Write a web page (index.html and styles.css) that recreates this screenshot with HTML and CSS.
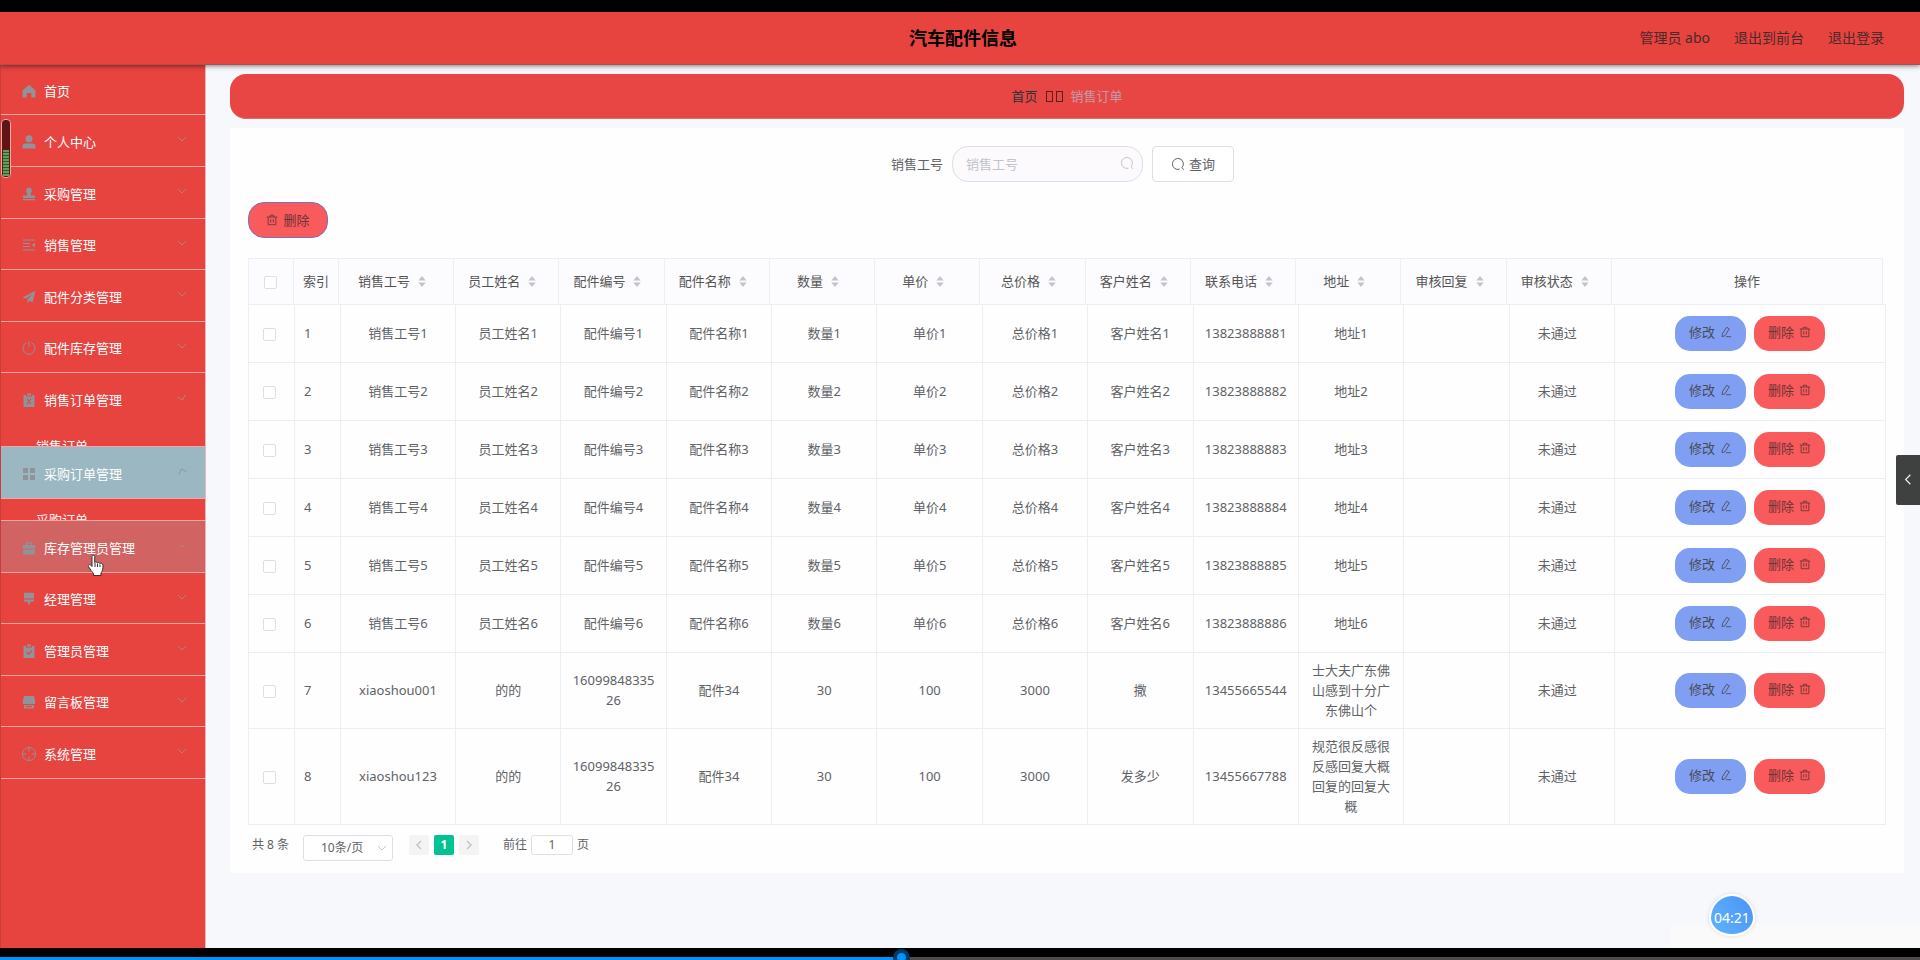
FILE: index.html
```html
<!DOCTYPE html>
<html lang="zh-CN">
<head>
<meta charset="utf-8">
<title>汽车配件信息</title>
<link rel="stylesheet" href="styles.css">
</head>
<body>
<svg class="sprite" aria-hidden="true">
  <symbol id="i-down" viewBox="0 0 10 10"><path d="M1 3l4 4 4-4" fill="none" stroke="currentColor"/></symbol>
  <symbol id="i-left" viewBox="0 0 10 10"><path d="M7 1L3 5l4 4" fill="none" stroke="currentColor" stroke-width="1.5"/></symbol>
  <symbol id="i-right" viewBox="0 0 10 10"><path d="M3 1l4 4-4 4" fill="none" stroke="currentColor" stroke-width="1.5"/></symbol>
  <symbol id="i-search" viewBox="0 0 14 14"><path d="M8.500 12.200A5.500 5.500 0 1 1 11 10.600L12.800 12.800" fill="none" stroke="currentColor"/></symbol>
  <symbol id="i-trash" viewBox="0 0 14 14"><path d="M1 3.500h12M5 3.500v-2h4v2M2.500 3.500v9h9v-9M5.500 6v4M8.500 6v4" fill="none" stroke="currentColor"/></symbol>
  <symbol id="i-edit" viewBox="0 0 14 14"><path d="M7.800 1.500l3 1.800-5 8-3.300 1.200.3-3.500zM7 12.500h6" fill="none" stroke="currentColor"/></symbol>
  <symbol id="i-home" viewBox="0 0 14 14"><path d="M7 .8l6.500 5.700V13.500H9.300V9H4.700v4.500H.5V6.500z" fill="currentColor"/></symbol>
  <symbol id="i-user" viewBox="0 0 14 14"><circle cx="7" cy="3.800" r="3.500" fill="currentColor"/><path d="M.5 13.500V11.500a3 3 0 0 1 3-3h7a3 3 0 0 1 3 3v2z" fill="currentColor"/></symbol>
  <symbol id="i-stamp" viewBox="0 0 14 14"><path d="M7 .5a3 3 0 0 1 2 5.200L8.800 8.500H13V11H1V8.500h4.200L5 5.700A3 3 0 0 1 7 .5zM1 12h12v1.200H1z" fill="currentColor"/></symbol>
  <symbol id="i-unfold" viewBox="0 0 14 14"><path d="M1 2h12M1 5.500h7M1 8.500h7M1 12h12" fill="none" stroke="currentColor" stroke-width="1.200"/><path d="M9.500 7L13 4.800v4.400z" fill="currentColor"/></symbol>
  <symbol id="i-send" viewBox="0 0 14 14"><path d="M13.500.8L.5 7.500l3.500 1.300L11 3.500 5.500 9.500v4l2-2.800 3 1.800z" fill="currentColor"/></symbol>
  <symbol id="i-power" viewBox="0 0 14 14"><path d="M4.500 1.800a6 6 0 1 0 5 0M7 .3v5.500" fill="none" stroke="currentColor"/></symbol>
  <symbol id="i-clip-x" viewBox="0 0 14 14"><path fill-rule="evenodd" d="M1.500 2H4v1.500h6V2h2.500v12h-11zM4.600 6.200l2 2.300-2 2.300.8.700L7 9.300l1.600 2.200.8-.7-2-2.300 2-2.300-.8-.7L7 7.700 5.400 5.500z" fill="currentColor"/><path d="M5 .5h4v2H5z" fill="currentColor"/></symbol>
  <symbol id="i-clip-v" viewBox="0 0 14 14"><path fill-rule="evenodd" d="M1.500 2H4v1.500h6V2h2.500v12h-11zM4 8.200l2.500 2.700L10.300 7l-.8-.8-3 3.100-1.700-1.900z" fill="currentColor"/><path d="M5 .5h4v2H5z" fill="currentColor"/></symbol>
  <symbol id="i-grid" viewBox="0 0 14 14"><path d="M1 1h5v5H1zM8 1h5v5H8zM1 8h5v5H1zM8 8h5v5H8z" fill="currentColor"/></symbol>
  <symbol id="i-case" viewBox="0 0 14 14"><path fill-rule="evenodd" d="M.8 4H4V1.500h6V4h3.200v3.500H.8zM5 2.500V4h4V2.500zM1.200 8.500h11.600v5H1.200z" fill="currentColor"/></symbol>
  <symbol id="i-brush" viewBox="0 0 14 14"><path d="M2 .8h10v5.700H2zM2 7.500h10v2H8.800L7 13.500 5.200 9.500H2z" fill="currentColor"/></symbol>
  <symbol id="i-shop" viewBox="0 0 14 14"><path d="M2 1h10l1.200 5v3H.8V6zM2 10h10v3.500H2z" fill="currentColor"/><path d="M1 9.500h12M4 11.500h6" stroke="#e7433f"/></symbol>
  <symbol id="i-aim" viewBox="0 0 14 14"><path d="M7 .5a6.500 6.500 0 1 0 .01 0M7 .5v4M7 9.500v4M.5 7h4M9.500 7h4" fill="none" stroke="currentColor"/></symbol>
  <symbol id="i-sort" viewBox="0 0 8 12"><path d="M4 0l4 5H0zM4 12l4-5H0z" fill="#c0c4cc"/></symbol>
</svg>

<header class="topbar">
  <h1 class="topbar-title">汽车配件信息</h1>
  <nav class="topbar-links"><span>管理员 abo</span><a href="#">退出到前台</a><a href="#">退出登录</a></nav>
</header>

<div class="layout">
  <aside class="sidebar">
    <ul class="menu">
      <li class="home"><a class="menu-title" href="#"><svg class="ico"><use href="#i-home"/></svg>首页</a></li>
      <li><a class="menu-title" href="#"><svg class="ico"><use href="#i-user"/></svg>个人中心<svg class="arrow"><use href="#i-down"/></svg></a></li>
      <li><a class="menu-title" href="#"><svg class="ico"><use href="#i-stamp"/></svg>采购管理<svg class="arrow"><use href="#i-down"/></svg></a></li>
      <li class="short"><a class="menu-title" href="#"><svg class="ico"><use href="#i-unfold"/></svg>销售管理<svg class="arrow"><use href="#i-down"/></svg></a></li>
      <li><a class="menu-title" href="#"><svg class="ico"><use href="#i-send"/></svg>配件分类管理<svg class="arrow"><use href="#i-down"/></svg></a></li>
      <li class="short"><a class="menu-title" href="#"><svg class="ico"><use href="#i-power"/></svg>配件库存管理<svg class="arrow"><use href="#i-down"/></svg></a></li>
      <li><a class="menu-title" href="#"><svg class="ico"><use href="#i-clip-x"/></svg>销售订单管理<svg class="arrow closing"><use href="#i-down"/></svg></a>
        <div class="submenu"><a href="#">销售订单</a></div></li>
      <li class="active"><a class="menu-title" href="#"><svg class="ico"><use href="#i-grid"/></svg>采购订单管理<svg class="arrow opening"><use href="#i-down"/></svg></a>
        <div class="submenu"><a href="#">采购订单</a></div></li>
      <li class="hover"><a class="menu-title" href="#"><svg class="ico"><use href="#i-case"/></svg>库存管理员管理<svg class="arrow"><use href="#i-down"/></svg></a></li>
      <li class="short"><a class="menu-title" href="#"><svg class="ico"><use href="#i-brush"/></svg>经理管理<svg class="arrow"><use href="#i-down"/></svg></a></li>
      <li><a class="menu-title" href="#"><svg class="ico"><use href="#i-clip-v"/></svg>管理员管理<svg class="arrow"><use href="#i-down"/></svg></a></li>
      <li class="short"><a class="menu-title" href="#"><svg class="ico"><use href="#i-shop"/></svg>留言板管理<svg class="arrow"><use href="#i-down"/></svg></a></li>
      <li><a class="menu-title" href="#"><svg class="ico"><use href="#i-aim"/></svg>系统管理<svg class="arrow"><use href="#i-down"/></svg></a></li>
    </ul>
  </aside>

  <main class="content">
    <nav class="crumbs"><a href="#">首页</a><span class="crumb-sep"><i></i><i></i></span><span class="crumb-now">销售订单</span></nav>

    <section class="card">
      <form class="search">
        <label for="no">销售工号</label>
        <div class="search-box"><input id="no" type="text" placeholder="销售工号"><svg class="ico14"><use href="#i-search"/></svg></div>
        <button class="btn-query" type="button"><svg class="ico14"><use href="#i-search"/></svg>查询</button>
      </form>
      <button class="btn-batch" type="button"><svg class="ico12"><use href="#i-trash"/></svg>删除</button>

      <table class="grid grid-head">
        <colgroup><col class="c-check"><col class="c-index"><col class="c-no"><col span="11"><col class="c-op"></colgroup>
        <thead><tr>
          <th><input type="checkbox" aria-label="全选"></th><th>索引</th>
          <th>销售工号<svg class="sort"><use href="#i-sort"/></svg></th><th>员工姓名<svg class="sort"><use href="#i-sort"/></svg></th><th>配件编号<svg class="sort"><use href="#i-sort"/></svg></th><th>配件名称<svg class="sort"><use href="#i-sort"/></svg></th><th>数量<svg class="sort"><use href="#i-sort"/></svg></th><th>单价<svg class="sort"><use href="#i-sort"/></svg></th><th>总价格<svg class="sort"><use href="#i-sort"/></svg></th><th>客户姓名<svg class="sort"><use href="#i-sort"/></svg></th><th>联系电话<svg class="sort"><use href="#i-sort"/></svg></th><th>地址<svg class="sort"><use href="#i-sort"/></svg></th><th>审核回复<svg class="sort"><use href="#i-sort"/></svg></th><th>审核状态<svg class="sort"><use href="#i-sort"/></svg></th><th>操作</th>
        </tr></thead>
      </table>
      <table class="grid grid-body">
        <colgroup><col class="c-check"><col class="c-index"><col class="c-no"><col span="11"><col class="c-op"></colgroup>
        <tbody>
          <tr><td><input type="checkbox" aria-label="选择1"></td><td>1</td><td>销售工号1</td><td>员工姓名1</td><td>配件编号1</td><td>配件名称1</td><td>数量1</td><td>单价1</td><td>总价格1</td><td>客户姓名1</td><td>13823888881</td><td>地址1</td><td></td><td class="status">未通过</td><td><div class="ops"><button class="op edit" type="button">修改<svg class="ico12"><use href="#i-edit"/></svg></button><button class="op del" type="button">删除<svg class="ico12"><use href="#i-trash"/></svg></button></div></td></tr>
          <tr><td><input type="checkbox" aria-label="选择2"></td><td>2</td><td>销售工号2</td><td>员工姓名2</td><td>配件编号2</td><td>配件名称2</td><td>数量2</td><td>单价2</td><td>总价格2</td><td>客户姓名2</td><td>13823888882</td><td>地址2</td><td></td><td class="status">未通过</td><td><div class="ops"><button class="op edit" type="button">修改<svg class="ico12"><use href="#i-edit"/></svg></button><button class="op del" type="button">删除<svg class="ico12"><use href="#i-trash"/></svg></button></div></td></tr>
          <tr><td><input type="checkbox" aria-label="选择3"></td><td>3</td><td>销售工号3</td><td>员工姓名3</td><td>配件编号3</td><td>配件名称3</td><td>数量3</td><td>单价3</td><td>总价格3</td><td>客户姓名3</td><td>13823888883</td><td>地址3</td><td></td><td class="status">未通过</td><td><div class="ops"><button class="op edit" type="button">修改<svg class="ico12"><use href="#i-edit"/></svg></button><button class="op del" type="button">删除<svg class="ico12"><use href="#i-trash"/></svg></button></div></td></tr>
          <tr><td><input type="checkbox" aria-label="选择4"></td><td>4</td><td>销售工号4</td><td>员工姓名4</td><td>配件编号4</td><td>配件名称4</td><td>数量4</td><td>单价4</td><td>总价格4</td><td>客户姓名4</td><td>13823888884</td><td>地址4</td><td></td><td class="status">未通过</td><td><div class="ops"><button class="op edit" type="button">修改<svg class="ico12"><use href="#i-edit"/></svg></button><button class="op del" type="button">删除<svg class="ico12"><use href="#i-trash"/></svg></button></div></td></tr>
          <tr><td><input type="checkbox" aria-label="选择5"></td><td>5</td><td>销售工号5</td><td>员工姓名5</td><td>配件编号5</td><td>配件名称5</td><td>数量5</td><td>单价5</td><td>总价格5</td><td>客户姓名5</td><td>13823888885</td><td>地址5</td><td></td><td class="status">未通过</td><td><div class="ops"><button class="op edit" type="button">修改<svg class="ico12"><use href="#i-edit"/></svg></button><button class="op del" type="button">删除<svg class="ico12"><use href="#i-trash"/></svg></button></div></td></tr>
          <tr><td><input type="checkbox" aria-label="选择6"></td><td>6</td><td>销售工号6</td><td>员工姓名6</td><td>配件编号6</td><td>配件名称6</td><td>数量6</td><td>单价6</td><td>总价格6</td><td>客户姓名6</td><td>13823888886</td><td>地址6</td><td></td><td class="status">未通过</td><td><div class="ops"><button class="op edit" type="button">修改<svg class="ico12"><use href="#i-edit"/></svg></button><button class="op del" type="button">删除<svg class="ico12"><use href="#i-trash"/></svg></button></div></td></tr>
          <tr><td><input type="checkbox" aria-label="选择7"></td><td>7</td><td>xiaoshou001</td><td>的的</td><td>1609984833526</td><td>配件34</td><td>30</td><td>100</td><td>3000</td><td>撒</td><td>13455665544</td><td>士大夫广东佛山感到十分广东佛山个</td><td></td><td class="status">未通过</td><td><div class="ops"><button class="op edit" type="button">修改<svg class="ico12"><use href="#i-edit"/></svg></button><button class="op del" type="button">删除<svg class="ico12"><use href="#i-trash"/></svg></button></div></td></tr>
          <tr><td><input type="checkbox" aria-label="选择8"></td><td>8</td><td>xiaoshou123</td><td>的的</td><td>1609984833526</td><td>配件34</td><td>30</td><td>100</td><td>3000</td><td>发多少</td><td>13455667788</td><td>规范很反感很反感回复大概回复的回复大概</td><td></td><td class="status">未通过</td><td><div class="ops"><button class="op edit" type="button">修改<svg class="ico12"><use href="#i-edit"/></svg></button><button class="op del" type="button">删除<svg class="ico12"><use href="#i-trash"/></svg></button></div></td></tr>
        </tbody>
      </table>

      <div class="pager">
        <span class="pager-total">共 8 条</span>
        <div class="pager-size"><select aria-label="每页条数"><option>10条/页</option></select><svg class="arrow10"><use href="#i-down"/></svg></div>
        <div class="pager-pages">
          <button type="button" aria-label="上一页"><svg class="arrow10"><use href="#i-left"/></svg></button>
          <button class="current" type="button">1</button>
          <button type="button" aria-label="下一页"><svg class="arrow10"><use href="#i-right"/></svg></button>
        </div>
        <div class="pager-jump"><label for="jump">前往</label><input id="jump" type="text" value="1"><span>页</span></div>
      </div>
    </section>
  </main>
</div>

<footer class="player"><div class="track"><div class="played" style="width:47%"></div></div></footer>

<div class="meter"><div class="meter-level"></div></div>
<button class="side-tab" type="button" aria-label="展开"><svg viewBox="0 0 10 14"><path d="M8 1L2 7l6 6" fill="none" stroke="#eee" stroke-width="1.500"/></svg></button>
<div class="haze"></div>
<div class="clock">04:21</div>
<svg class="cursor" viewBox="0 0 18 23"><path d="M5 2.500C5 .8 7.700.8 7.700 2.500V8.500c.3-1 2.500-.8 2.600.4.500-.8 2.300-.5 2.500.7.600-.7 3.200-.4 3.200 1.400 0 3.500-.3 6-2 8v2.500H6.500V19.500C4.500 17.500 3 15 1.500 12.500.7 11 2.500 9.800 3.600 11L5 12.500z" fill="#fff" stroke="#333"/><path d="M8 9v4M10.500 9.500V13M13 10.500V13" stroke="#333" fill="none"/></svg>
</body>
</html>
```
FILE: styles.css
```css
*, *::after { box-sizing: border-box; }
body {
  margin: 0;
  min-height: 100vh;
  display: flex;
  flex-direction: column;
  overflow: hidden;
  border-top: 12px solid #000;
  background: #f6f8fc;
  color: #606266;
  font: 13px/20px "Noto Sans", "Noto Sans CJK SC", sans-serif;
}
a { color: inherit; text-decoration: none; }
button, input, select { font: inherit; color: inherit; }
button { cursor: pointer; }
.sprite { position: absolute; width: 0; height: 0; }

.topbar {
  position: relative;
  z-index: 1;
  display: grid;
  grid-template-columns: 1fr auto 1fr;
  align-items: center;
  height: 53px;
  padding: 0 36px 0 42px;
  background: #e7433f;
  border-bottom: 1px solid #a8514f;
  box-shadow: 0 1px 5px rgba(0, 0, 0, .5);
}
.topbar-title { grid-column: 2; margin: 0; font-size: 18px; line-height: 28px; font-weight: 700; color: #000; }
.topbar-links { display: flex; justify-content: flex-end; gap: 24px; font-size: 14px; color: #4a2a2a; }

.layout { flex: 1; display: flex; }
.sidebar { width: 206px; flex: none; background: #e7433f; border-right: 1px solid #e6b8b8; border-left: 1px solid #cb3d3a; }
.menu { margin: 0; padding: 0; list-style: none; color: #fff; }
.menu-title {
  display: flex;
  align-items: center;
  height: 52px;
  padding: 2px 18px 0 21px;
  border-bottom: 1px solid #f0a6a4;
}
.short .menu-title { height: 51px; }
.home .menu-title { height: 50px; }
.ico { width: 14px; height: 14px; margin-right: 8px; color: #909399; }
.arrow { width: 10px; height: 10px; margin: 0 0 5px auto; color: #b4807f; }
.closing { transform: rotate(-15deg); }
.opening { transform: rotate(160deg); color: #8f979e; }
.menu-title:has(.closing) { border-bottom: 0; }
.submenu { height: 22px; overflow: hidden; border-bottom: 1px solid #f0a6a4; }
.submenu a { display: block; padding-left: 35px; line-height: 42px; }
.active .menu-title { background: #9bb7c1; }
.hover .menu-title { background: #d16463; }

.content { flex: 1; min-width: 0; padding: 9px 16px 20px 24px; }
.crumbs {
  display: flex;
  justify-content: center;
  align-items: center;
  gap: 8px;
  height: 45px;
  border-radius: 16px;
  background: #e84645;
  border-bottom: 1px solid #d07070;
  color: #303133;
}
.crumb-sep { display: flex; gap: 3px; }
.crumb-sep i { width: 7px; height: 11px; border: 1px solid #5a2020; }
.crumb-now { color: #c49aa8; }

.card { margin-top: 9px; padding: 18px 18px 12px; background: #fefefe; }
.search { display: flex; justify-content: center; align-items: center; gap: 9px; padding-right: 9px; }
.search-box { position: relative; width: 191px; }
.search-box input {
  width: 100%;
  height: 36px;
  padding: 0 32px 0 13px;
  border: 1px solid #dcdfe6;
  border-radius: 16px;
  background: #fcfafc;
}
.search-box input::placeholder { color: #c0c4cc; }
.search-box svg { position: absolute; right: 9px; top: 10px; color: #c0c4cc; }
.ico14 { width: 14px; height: 14px; flex: none; }
.ico12 { width: 12px; height: 12px; flex: none; }
.btn-query {
  display: flex;
  align-items: center;
  justify-content: center;
  gap: 4px;
  width: 82px;
  height: 36px;
  padding: 0 0 1px;
  border: 1px solid #dcdfe6;
  border-radius: 4px;
  background: #fff;
}
.btn-batch {
  display: flex;
  align-items: center;
  justify-content: center;
  gap: 5px;
  width: 80px;
  height: 36px;
  margin: 20px 0;
  padding: 0 0 1px;
  border: 1px solid #7c74b8;
  border-radius: 16px;
  background: #f95a5b;
  color: #6d3437;
}

.grid { table-layout: fixed; border-collapse: collapse; width: 100%; }
.grid-head { width: calc(100% - 3px); background: #fcfbfe; color: #555; }
.c-check, .c-index { width: 46px; }
.grid-head .c-check, .grid-head .c-index { width: 45px; }
.c-no { width: 115px; }
.c-op { width: 271px; }
.grid th, .grid td { padding: 7px 10px 8px; border: 1px solid #ebeef5; text-align: center; word-break: break-all; }
.grid th { height: 46px; padding: 0 0 2px; font-weight: 400; }
.grid-body { margin-top: -1px; }
.grid td { height: 58px; }
.grid th:first-child { padding-right: 2px; }
.grid td:first-child { padding-right: 14px; }
.grid td:nth-child(2) { padding-left: 9px; text-align: left; }
.grid .status { padding-right: 19px; }
.grid input {
  appearance: none;
  display: inline-block;
  width: 13px;
  height: 13px;
  margin: 0;
  border: 1px solid #dcdfe6;
  border-radius: 2px;
  background: #fff;
  vertical-align: middle;
}
.sort { width: 8px; height: 11px; margin: 0 8px; vertical-align: -1px; }
.ops { display: flex; justify-content: center; gap: 8px; }
.op {
  display: flex;
  align-items: center;
  justify-content: center;
  gap: 5px;
  width: 71px;
  height: 35px;
  padding: 0 0 2px;
  border: 0;
  border-radius: 15px;
  color: #4a4a55;
}
.edit { background: #809ff3; }
.del { background: #f95a5b; color: #6d3437; }

.pager { display: flex; align-items: flex-start; padding: 10px 0 0 4px; font-size: 12px; }
.pager-total { width: 51px; }
.pager-size { position: relative; width: 90px; margin-right: 16px; }
.pager-size select {
  display: block;
  appearance: none;
  width: 100%;
  height: 26px;
  padding: 0 24px 0 17px;
  border: 1px solid #dcdfe6;
  border-radius: 3px;
  background: #fff;
}
.arrow10 { display: block; width: 10px; height: 10px; }
.pager-size svg { position: absolute; right: 6px; top: 8px; color: #c0c4cc; }
.pager-pages { display: flex; gap: 5px; margin-right: 24px; color: #c0c4cc; }
.pager-pages button {
  display: grid;
  place-items: center;
  width: 20px;
  height: 20px;
  padding: 0;
  border: 0;
  border-radius: 2px;
  background: #f4f4f5;
}
.pager-pages .current { background: #00c292; color: #fff; font-weight: 700; }
.pager-jump { display: flex; gap: 4px; }
.pager-jump input { width: 42px; height: 20px; padding: 0; border: 1px solid #dcdfe6; border-radius: 3px; text-align: center; background: #fff; }

.player { background: #000; padding-top: 9px; }
.track { height: 3px; background: #4f4b4c; }
.played { position: relative; height: 3px; background: #0094ff; }
.played::after {
  content: "";
  position: absolute;
  right: -8px;
  top: -8px;
  width: 17px;
  height: 17px;
  border: 4px solid #003a66;
  border-radius: 50%;
  background: #0094ff;
}

.meter {
  position: absolute;
  z-index: 2;
  left: 1px;
  top: 119px;
  width: 10px;
  height: 59px;
  padding: 30px 1px 1px;
  border: 1px solid #f0a8a0;
  border-radius: 4px;
  background: #5e1516;
}
.meter-level { height: 26px; background: repeating-linear-gradient(#5ba35a 0 2px, #2f5a2a 2px 3px); }
.side-tab {
  position: absolute;
  right: 0;
  top: 455px;
  width: 24px;
  height: 50px;
  padding: 0;
  border: 0;
  border-radius: 2px 0 0 2px;
  background: #3f4040;
}
.side-tab svg { width: 8px; height: 11px; }
.haze { position: absolute; right: 0; top: 924px; width: 249px; height: 24px; background: #fafafa; }
.clock {
  position: absolute;
  left: 1709px;
  top: 894px;
  width: 46px;
  height: 42px;
  border: 2px solid #fff;
  border-radius: 50% 50% 50% 50% / 58% 58% 42% 42%;
  box-shadow: 0 0 4px rgba(0, 0, 0, .12);
  background: linear-gradient(60deg, #5fb4fb, #4a93f8);
  color: #fff;
  font-size: 14px;
  line-height: 44px;
  display: flex;
  justify-content: center;
}
.cursor { position: absolute; left: 87px; top: 554px; width: 18px; height: 23px; }
```
